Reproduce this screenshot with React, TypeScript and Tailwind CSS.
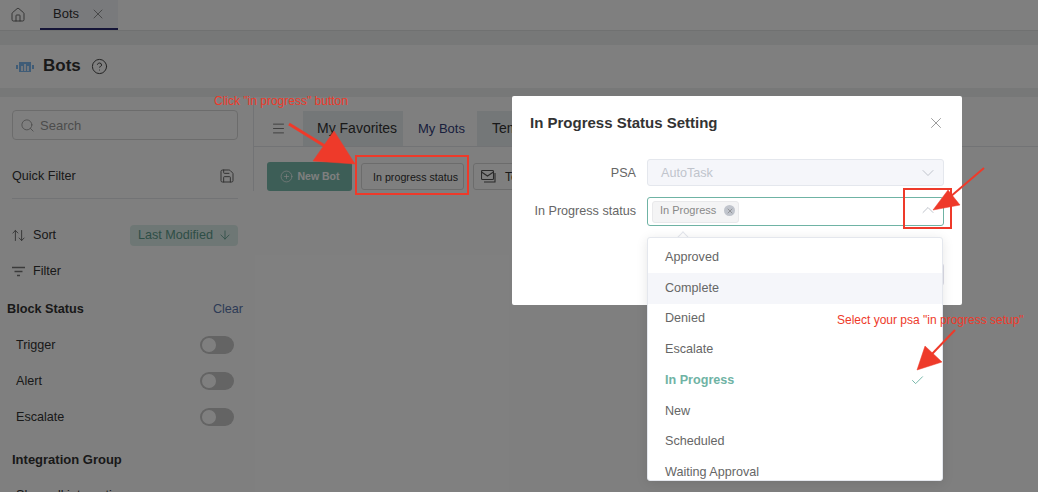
import React from 'react'
import { ArrowDown, ArrowUpDown, Check, ChevronDown, ChevronUp, CirclePlus, CircleHelp, Home, Menu, Save, Search, X } from 'lucide-react'

const statuses = ['Approved', 'Complete', 'Denied', 'Escalate', 'In Progress', 'New', 'Scheduled', 'Waiting Approval']

function Toggle() {
  return (
    <div className="flex h-[18px] w-[34px] items-center rounded-full bg-[#c8c8c8] pl-[2px]">
      <div className="h-[14px] w-[14px] rounded-full bg-white" />
    </div>
  )
}

function BotRow({ label }: { label: string }) {
  return (
    <div className="flex h-9 items-center justify-between pl-[16px] pr-[19px]">
      <span>{label}</span>
      <Toggle />
    </div>
  )
}

function BotLogo() {
  return (
    <svg width="18" height="10" viewBox="0 0 18 10" className="shrink-0">
      <rect x="0" y="3" width="2" height="4" fill="#7fb8ee" />
      <rect x="16" y="3" width="2" height="4" fill="#7fb8ee" />
      <rect x="3" y="0" width="12" height="10" fill="#7fb8ee" />
      <rect x="5" y="4" width="2" height="5" fill="#e6eef8" />
      <rect x="8" y="2" width="2" height="7" fill="#e6eef8" />
      <rect x="11" y="4" width="2" height="5" fill="#e6eef8" />
    </svg>
  )
}

function Sidebar() {
  return (
    <div className="w-[253px] shrink-0 pt-[13px] text-[12.6px] text-[#333]">
      <div className="mx-3 flex h-[30px] w-[226px] items-center gap-[5px] rounded border border-[#d9d9d9] pl-[7px] text-[#999]">
        <Search size={15} strokeWidth={1.4} />
        <span className="pt-[1px] text-[13px]">Search</span>
      </div>
      <div className="mx-3 mt-[20px] flex h-[31px] w-[226px] items-center justify-between">
        <span className="pt-[1px]">Quick Filter</span>
        <Save size={16} strokeWidth={1.5} className="mr-[3px] text-[#666]" />
      </div>
      <div className="mx-3 mt-[7px] h-px w-[226px] bg-[#e4e6ea]" />
      <div className="mt-[18px] flex h-9 items-center pl-[11px] pr-[15px]">
        <ArrowUpDown size={15} strokeWidth={1.5} className="text-[#666]" />
        <span className="ml-[7px]">Sort</span>
        <span className="ml-auto flex h-[21px] w-[108px] items-center gap-[5px] rounded bg-[#dcefea] pl-2 text-[#5d9d8e]">
          Last Modified
          <ArrowDown size={14} strokeWidth={1.4} />
        </span>
      </div>
      <div className="flex h-9 items-center pl-3">
        <svg width="13" height="11" viewBox="0 0 13 11" stroke="#777" strokeWidth="1.3">
          <path d="M0 1.5h13M2.5 5.5h8M5 9.5h3" />
        </svg>
        <span className="ml-[8px]">Filter</span>
      </div>
      <div className="mt-[2px] flex h-9 items-center justify-between pl-[7px] pr-[10px]">
        <span className="pt-[1px] text-[12.7px] font-bold">Block Status</span>
        <span className="text-[#5b77ad]">Clear</span>
      </div>
      <BotRow label="Trigger" />
      <BotRow label="Alert" />
      <BotRow label="Escalate" />
      <div className="ml-3 mt-[15px] text-[13px] font-bold leading-[20px]">Integration Group</div>
      <div className="ml-4 mt-[15px] leading-[20px]">Show all integrations</div>
    </div>
  )
}

function MainPanel() {
  return (
    <div className="min-w-0 flex-1 text-[12px] text-[#333]">
      <div className="h-[94px] border-l border-[#e4e6ea] pt-[14px]">
        <div className="flex h-[36px] items-stretch border-b border-[#e4e6ea] pl-[17px]">
          <Menu size={15} strokeWidth={1.5} className="mr-[17px] self-center text-[#777]" />
          <div className="flex w-[100px] items-center bg-[#e9eef0] pl-[14px] text-[14px]">My Favorites</div>
          <div className="flex w-[74px] items-center bg-white pl-[15px] text-[13px] text-[#33407a]">My Bots</div>
          <div className="flex w-[100px] items-center bg-[#e9eef0] pl-[15px] text-[14px]">Templates</div>
        </div>
        <div className="mt-[15px] flex items-stretch pl-[13px]">
          <div className="flex h-[29px] w-[85px] items-center justify-center gap-[5px] rounded-[3px] bg-[#7bbcae] text-[10.5px] font-bold text-white">
            <CirclePlus size={13} strokeWidth={1.3} />
            New Bot
          </div>
          <div className="ml-[9px] flex h-[27px] w-[103px] items-center justify-end self-center rounded-[3px] border border-[#d9d9d9] pr-[5px] pt-[1px] text-[10.7px]">
            In progress status
          </div>
          <div className="ml-[9px] flex h-[27px] w-[110px] items-center gap-[9px] self-center rounded-[3px] border border-[#d9d9d9] pl-[7px]">
            <svg width="15" height="13" viewBox="0 0 15 13" fill="none" stroke="#555" strokeWidth="1.1">
              <rect x="0.5" y="0.5" width="12" height="9" rx="1" />
              <path d="M0.5 2l6 4 6-4M14 3v9H3" />
            </svg>
            <span>Test</span>
          </div>
        </div>
      </div>
    </div>
  )
}

function Page() {
  return (
    <div className="flex h-full flex-col bg-[#eef1f1]">
      <div className="flex h-[31px] shrink-0 items-stretch border-b border-[#e0e3e3] bg-white text-[13px] text-[#333]">
        <div className="flex w-[40px] items-center pl-[10px]">
          <Home size={16} strokeWidth={1.3} className="text-[#555]" />
        </div>
        <div className="flex w-[78px] items-center gap-[11px] border-b-2 border-[#2a2a70] bg-[#f2f4f9] pl-[13px]">
          Bots
          <X size={16} strokeWidth={1.2} className="text-[#777]" />
        </div>
      </div>
      <div className="mt-[14px] flex h-[43px] shrink-0 items-center bg-white pl-[16px]">
        <BotLogo />
        <span className="ml-[9px] pb-[1px] text-[17px] font-bold text-[#333]">Bots</span>
        <CircleHelp size={17} strokeWidth={1.4} className="ml-[10px] mb-[1px] text-[#444]" />
      </div>
      <div className="mt-[9px] flex min-h-0 flex-1 overflow-hidden bg-white">
        <Sidebar />
        <MainPanel />
      </div>
    </div>
  )
}

function StatusModal() {
  return (
    <div className="absolute left-[512px] top-[96px] h-[209px] w-[450px] rounded-[2px] bg-white px-[18px] pt-[18px]">
      <div className="flex h-[18px] items-center justify-between">
        <span className="text-[15px] font-bold leading-[18px] text-[#333]">In Progress Status Setting</span>
        <X size={18} strokeWidth={1.1} className="-mr-[1px] -mt-[1px] text-[#888]" />
      </div>
      <div className="mt-[27px] flex h-[27px] w-[414px] items-center text-[12.6px]">
        <span className="w-[106px] pt-[1px] text-right text-[#666]">PSA</span>
        <div className="ml-[11px] flex h-[27px] flex-1 items-center justify-between rounded-[3px] border border-[#e4e7ed] bg-[#f5f6fa] pl-[13px] pr-[5px] text-[#c0c4cc]">
          <span className="pt-[1px]">AutoTask</span>
          <ChevronDown size={20} strokeWidth={1.2} />
        </div>
      </div>
      <div className="mt-[11px] flex h-[29px] w-[414px] items-center text-[12.6px]">
        <span className="w-[106px] pb-[1px] text-right text-[#666]">In Progress status</span>
        <div className="ml-[11px] flex h-[29px] flex-1 items-center justify-between rounded-[3px] border border-[#6fb3a4] pl-[4px] pr-[5px]">
          <span className="flex h-[22px] items-center gap-[8px] rounded-[3px] border border-[#e9e9eb] bg-[#f4f4f5] pb-[2px] pl-[7px] pr-[3px] text-[11px] text-[#888]">
            In Progress
            <span className="flex h-[11px] w-[11px] items-center justify-center rounded-full bg-[#c0c4cc]">
              <X size={8} strokeWidth={1.5} className="text-[#666]" />
            </span>
          </span>
          <ChevronUp size={20} strokeWidth={1.2} className="mb-[3px] text-[#c0c4cc]" />
        </div>
      </div>
      <div className="ml-auto mt-[37px] h-[23px] w-[60px] rounded-[3px] border border-[#dcdce6]" />
    </div>
  )
}

function StatusDropdown() {
  return (
    <>
      <div className="absolute left-[679px] top-[233px] h-[8px] w-[8px] rotate-45 border-l border-t border-[#e4e7ed] bg-white" />
      <div className="absolute left-[647px] top-[237px] h-[244px] w-[296px] overflow-hidden rounded-[3px] border border-[#e4e7ed] bg-white pt-[4px] text-[12.6px] text-[#666] shadow-[0_2px_12px_rgba(0,0,0,0.1)]">
        {statuses.map(s => (
          <div
            key={s}
            className={`flex h-[30.75px] items-center justify-between pl-[17px] pr-[17px] ${s === 'Complete' ? 'bg-[#f5f6fa]' : ''} ${s === 'In Progress' ? 'font-bold text-[#6fb3a4]' : ''}`}
          >
            {s}
            {s === 'In Progress' && <Check size={15} strokeWidth={1.5} />}
          </div>
        ))}
      </div>
    </>
  )
}

function Annotations() {
  return (
    <>
      <span className="absolute left-[214px] top-[94px] text-[12px] leading-[14px] text-[#ee3a2a]">Click "in progress" button</span>
      <span className="absolute left-[837px] top-[313px] text-[12px] leading-[14px] text-[#ee3a2a]">Select your psa "in progress setup"</span>
      <div className="absolute left-[355px] top-[155px] h-[40px] w-[114px] border-2 border-[#ee3a2a]" />
      <div className="absolute left-[903px] top-[188px] h-[41px] w-[49px] border-2 border-[#ee3a2a]" />
      <svg className="absolute left-0 top-0" width="1038" height="492" fill="#ee3a2a" stroke="#ee3a2a">
        <path d="M289 124L328 148" strokeWidth="3" />
        <path d="M334 131L313 161L355 164Z" strokeWidth="0.5" />
        <path d="M984 168L950 197" strokeWidth="2" />
        <path d="M948 190L960 205L933 210Z" strokeWidth="0.5" />
        <path d="M955 330L932 354" strokeWidth="2" />
        <path d="M925 346L942 362L917 370Z" strokeWidth="0.5" />
      </svg>
    </>
  )
}

export default function App() {
  return (
    <div className="relative h-[492px] w-[1038px] overflow-hidden font-['Liberation_Sans',sans-serif]">
      <Page />
      <div className="absolute inset-0 bg-black/50" />
      <StatusModal />
      <StatusDropdown />
      <Annotations />
    </div>
  )
}
